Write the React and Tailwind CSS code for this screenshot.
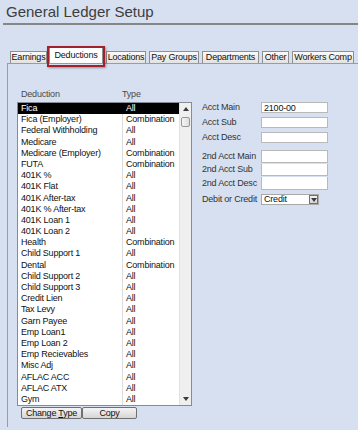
import React from "react";

const deductions = [
	["Fica", "All"],
	["Fica (Employer)", "Combination"],
	["Federal Withholding", "All"],
	["Medicare", "All"],
	["Medicare (Employer)", "Combination"],
	["FUTA", "Combination"],
	["401K %", "All"],
	["401K Flat", "All"],
	["401K After-tax", "All"],
	["401K % After-tax", "All"],
	["401K Loan 1", "All"],
	["401K Loan 2", "All"],
	["Health", "Combination"],
	["Child Support 1", "All"],
	["Dental", "Combination"],
	["Child Support 2", "All"],
	["Child Support 3", "All"],
	["Credit Lien", "All"],
	["Tax Levy", "All"],
	["Garn Payee", "All"],
	["Emp Loan1", "All"],
	["Emp Loan 2", "All"],
	["Emp Recievables", "All"],
	["Misc Adj", "All"],
	["AFLAC ACC", "All"],
	["AFLAC ATX", "All"],
	["Gym", "All"],
];

const tabs = [
	{ label: "Earnings", cls: "ml-[10px] w-[37px]" },
	{ label: "Deductions", cls: "ml-[2px] w-[54px]", selected: true },
	{ label: "Locations", cls: "ml-[3px] w-[40px]" },
	{ label: "Pay Groups", cls: "ml-[3px] w-[50px]" },
	{ label: "Departments", cls: "ml-[3px] w-[57px]" },
	{ label: "Other", cls: "ml-[3px] w-[27px]" },
	{ label: "Workers Comp", cls: "ml-[3px] w-[62px]" },
];

const Arrow = ({ up }) => (
	<svg width="6" height="4" viewBox="0 0 6 4">
		<path d={up ? "M0 4 L3 0 L6 4 Z" : "M0 0 L6 0 L3 4 Z"} fill="#3c3c3c" />
	</svg>
);

const Field = ({ label, value, cls = "" }) => (
	<div className="flex items-center">
		<span className="w-[59px] text-[#333]">{label}</span>
		<div className={`w-[67px] bg-white border border-[#b9b9b9] pl-[2px] leading-[10px] ${cls}`}>
			{value}
		</div>
	</div>
);

const App = () => {
	return (
		<div className="w-[364px] h-[432px] bg-white">
			<div className="w-[358px] h-[430px] bg-[#d6e0f0] overflow-hidden font-['Liberation_Sans',Arial,sans-serif] text-[9px] tracking-[-0.2px] text-[#111]">
				<div className="pl-[6px] pt-[3px] text-[15px] leading-[18px] tracking-normal text-[#3d3d3d]">
					General Ledger Setup
				</div>
				<div className="ml-[3px] mt-[2px] h-[2px] bg-[#868686]" />

				{/* tab strip */}
				<div className="mt-[22px] h-[16px] flex items-end">
					{tabs.map((tab) =>
						tab.selected ? (
							<div
								key={tab.label}
								className={`relative h-[16px] bg-white border border-b-0 border-[#8f8f8f] flex items-center justify-center ${tab.cls}`}
							>
								{tab.label}
								<span className="absolute left-[-3px] right-[-3px] top-[-2px] bottom-[-4px] border-[2.5px] border-[#a1222a] shadow-[1px_1px_2px_rgba(0,0,0,0.35)]" />
							</div>
						) : (
							<div
								key={tab.label}
								className={`h-[12px] bg-gradient-to-b from-[#fafafa] to-[#e2e2e2] border border-b-0 border-[#8f8f8f] flex items-center justify-center ${tab.cls}`}
							>
								{tab.label}
							</div>
						)
					)}
				</div>

				{/* panel */}
				<div className="ml-[7px] h-[364px] border-l border-t border-[#9c9c9c] flex">
					<div className="ml-[9px] pt-[25px] w-[175px]">
						<div className="flex leading-[10px] text-[#4a4a4a]">
							<span className="pl-[4px] w-[105px]">Deduction</span>
							<span>Type</span>
						</div>
						<div className="mt-[3px] border border-[#868b94] bg-white flex">
							<div className="flex-1">
								{deductions.map(([name, type], i) => (
									<div
										key={name}
										className={`h-[11.2px] leading-[11.2px] flex whitespace-nowrap ${
											i === 0 ? "bg-black text-white" : ""
										}`}
									>
										<span className="w-[104px] pl-[3px]">{name}</span>
										<span
											className={`flex-1 pl-[3px] border-l ${
												i === 0 ? "border-black" : "border-[#dcdcdc]"
											}`}
										>
											{type}
										</span>
									</div>
								))}
							</div>
							<div className="w-[12px] bg-[#efefef] border-l border-[#e2e2e2] flex flex-col">
								<div className="h-[12px] flex items-center justify-center">
									<Arrow up />
								</div>
								<div className="mt-[2px] mx-[1px] h-[10px] rounded-[2px] border border-[#979797] bg-gradient-to-r from-[#f6f6f6] to-[#dedede]" />
								<div className="flex-1" />
								<div className="h-[12px] flex items-center justify-center">
									<Arrow />
								</div>
							</div>
						</div>
						<div className="mt-[1px] ml-[4px] flex">
							<button className="w-[61px] h-[12px] leading-[10px] rounded-[2px] border border-[#707070] bg-gradient-to-b from-[#f4f4f4] to-[#d6d6d6]">
								Change <span className="underline">T</span>ype
							</button>
							<button className="w-[55px] h-[12px] leading-[10px] rounded-[2px] border border-[#707070] bg-gradient-to-b from-[#f4f4f4] to-[#d6d6d6]">
								Copy
							</button>
						</div>
					</div>

					<div className="ml-[10px] pt-[37px] flex flex-col">
						<div className="flex flex-col gap-[1.5px]">
							<Field label="Acct Main" value="2100-00" cls="h-[11px]" />
							<Field label="Acct Sub" cls="h-[11px]" />
							<Field label="Acct Desc" cls="h-[11px]" />
						</div>
						<div className="mt-[5px] flex flex-col">
							<Field label="2nd Acct Main" cls="h-[12.5px]" />
							<Field label="2nd Acct Sub" cls="h-[12.5px] border-t-0" />
							<Field label="2nd Acct Desc" cls="h-[12.5px] border-t-0" />
						</div>
						<div className="mt-[3px] flex items-center">
							<span className="w-[59px] text-[#333]">Debit or Credit</span>
							<div className="w-[58px] h-[11px] bg-white border border-[#a9a9a9] flex items-center">
								<span className="flex-1 pl-[2px] leading-[9px]">Credit</span>
								<div className="w-[9px] h-[9px] border border-[#6f6f6f] bg-gradient-to-b from-[#f4f4f4] to-[#d4d4d4] flex items-center justify-center">
									<Arrow />
								</div>
							</div>
						</div>
					</div>
				</div>
			</div>
		</div>
	);
};

export default App;
